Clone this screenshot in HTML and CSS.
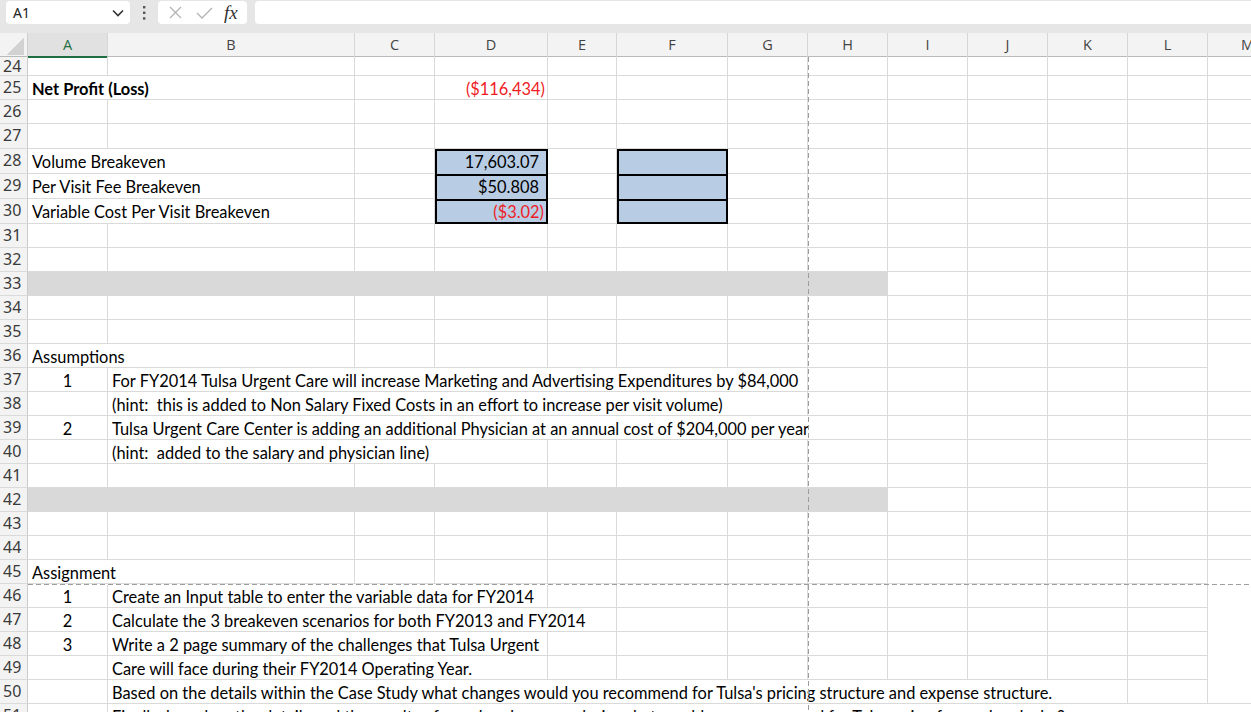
FILE: index.html
```html
<!DOCTYPE html>
<html lang="en">
<head>
    <meta charset="UTF-8">
    <title>Tulsa Urgent Care - Breakeven</title>
    <link rel="stylesheet" href="styles.css">
</head>
<body>
<div class="topbar">
    <div class="namebox">
        <span>A1</span>
        <svg width="12" height="8" viewBox="0 0 12 8"><path d="M1 1.5 L6 6.5 L11 1.5" fill="none" stroke="#333" stroke-width="1.6"/></svg>
    </div>
    <div class="dots">
        <svg width="4" height="14" viewBox="0 0 4 14"><rect x="1" y="0" width="2.4" height="2.4" fill="#555"/><rect x="1" y="5.6" width="2.4" height="2.4" fill="#555"/><rect x="1" y="11.2" width="2.4" height="2.4" fill="#555"/></svg>
    </div>
    <div class="fxbox">
        <svg class="cancel" width="13" height="13" viewBox="0 0 13 13"><path d="M1 1 L12 12 M12 1 L1 12" stroke="#b3b3b3" stroke-width="1.3"/></svg>
        <svg class="enter" width="17" height="12" viewBox="0 0 17 12"><path d="M1 6 L6 11 L16 1" fill="none" stroke="#b3b3b3" stroke-width="1.3"/></svg>
        <span class="fx">fx</span>
    </div>
    <div class="formula"></div>
</div>

<div class="sheet">
    <div class="colhead">
        <div class="corner"><i></i></div>
        <div class="sel">A</div><div>B</div><div>C</div><div>D</div><div>E</div><div>F</div><div>G</div>
        <div>H</div><div>I</div><div>J</div><div>K</div><div>L</div><div>M</div>
    </div>

    <div class="row short"><div class="rh">24</div><div></div><div></div><div></div><div></div><div></div><div></div><div></div><div></div><div></div><div></div><div></div><div></div><div></div></div>
    <div class="row"><div class="rh">25</div><div class="t s2 bold">Net Profit (Loss)</div><div></div><div class="r red neg">($116,434)</div><div></div><div></div><div></div><div></div><div></div><div></div><div></div><div></div><div></div></div>
    <div class="row"><div class="rh">26</div><div></div><div></div><div></div><div></div><div></div><div></div><div></div><div></div><div></div><div></div><div></div><div></div><div></div></div>
    <div class="row tall"><div class="rh">27</div><div></div><div></div><div></div><div></div><div></div><div></div><div></div><div></div><div></div><div></div><div></div><div></div><div></div></div>
    <div class="row tall"><div class="rh">28</div><div class="t s2">Volume Breakeven</div><div></div><div class="r blue top">17,603.07</div><div></div><div class="blue top"></div><div></div><div></div><div></div><div></div><div></div><div></div><div></div></div>
    <div class="row tall"><div class="rh">29</div><div class="t s2">Per Visit Fee Breakeven</div><div></div><div class="r blue">$50.808</div><div></div><div class="blue"></div><div></div><div></div><div></div><div></div><div></div><div></div><div></div></div>
    <div class="row tall"><div class="rh">30</div><div class="t s2">Variable Cost Per Visit Breakeven</div><div></div><div class="r red neg blue bot">($3.02)</div><div></div><div class="blue bot"></div><div></div><div></div><div></div><div></div><div></div><div></div><div></div></div>
    <div class="row"><div class="rh">31</div><div></div><div></div><div></div><div></div><div></div><div></div><div></div><div></div><div></div><div></div><div></div><div></div><div></div></div>
    <div class="row"><div class="rh">32</div><div></div><div></div><div></div><div></div><div></div><div></div><div></div><div></div><div></div><div></div><div></div><div></div><div></div></div>
    <div class="row"><div class="rh">33</div><div class="grey s8"></div><div></div><div></div><div></div><div></div><div></div></div>
    <div class="row"><div class="rh">34</div><div></div><div></div><div></div><div></div><div></div><div></div><div></div><div></div><div></div><div></div><div></div><div></div><div></div></div>
    <div class="row"><div class="rh">35</div><div></div><div></div><div></div><div></div><div></div><div></div><div></div><div></div><div></div><div></div><div></div><div></div><div></div></div>
    <div class="row"><div class="rh">36</div><div class="t s2">Assumptions</div><div></div><div></div><div></div><div></div><div></div><div></div><div></div><div></div><div></div><div></div></div>
    <div class="row"><div class="rh">37</div><div class="num">1</div><div class="t s6">For FY2014 Tulsa Urgent Care will increase Marketing and Advertising Expenditures by $84,000</div><div></div><div></div><div></div><div></div><div></div><div></div></div>
    <div class="row"><div class="rh">38</div><div></div><div class="t s6">(hint:&nbsp; this is added to Non Salary Fixed Costs in an effort to increase per visit volume)</div><div></div><div></div><div></div><div></div><div></div><div></div></div>
    <div class="row"><div class="rh">39</div><div class="num">2</div><div class="t s7">Tulsa Urgent Care Center is adding an additional Physician at an annual cost of $204,000 per year</div><div></div><div></div><div></div><div></div><div></div></div>
    <div class="row"><div class="rh">40</div><div></div><div class="t s3">(hint:&nbsp; added to the salary and physician line)</div><div></div><div></div><div></div><div></div><div></div><div></div><div></div><div></div></div>
    <div class="row"><div class="rh">41</div><div></div><div></div><div></div><div></div><div></div><div></div><div></div><div></div><div></div><div></div><div></div><div></div><div></div></div>
    <div class="row"><div class="rh">42</div><div class="grey s8"></div><div></div><div></div><div></div><div></div><div></div></div>
    <div class="row"><div class="rh">43</div><div></div><div></div><div></div><div></div><div></div><div></div><div></div><div></div><div></div><div></div><div></div><div></div><div></div></div>
    <div class="row"><div class="rh">44</div><div></div><div></div><div></div><div></div><div></div><div></div><div></div><div></div><div></div><div></div><div></div><div></div><div></div></div>
    <div class="row"><div class="rh">45</div><div class="t s2">Assignment</div><div></div><div></div><div></div><div></div><div></div><div></div><div></div><div></div><div></div><div></div></div>
    <div class="row"><div class="rh">46</div><div class="num">1</div><div class="t s3">Create an Input table to enter the variable data for FY2014</div><div></div><div></div><div></div><div></div><div></div><div></div><div></div><div></div></div>
    <div class="row"><div class="rh">47</div><div class="num">2</div><div class="t s4">Calculate the 3 breakeven scenarios for both FY2013 and FY2014</div><div></div><div></div><div></div><div></div><div></div><div></div><div></div></div>
    <div class="row"><div class="rh">48</div><div class="num">3</div><div class="t s3">Write a 2 page summary of the challenges that Tulsa Urgent</div><div></div><div></div><div></div><div></div><div></div><div></div><div></div><div></div></div>
    <div class="row"><div class="rh">49</div><div></div><div class="t s3">Care will face during their FY2014 Operating Year.</div><div></div><div></div><div></div><div></div><div></div><div></div><div></div><div></div></div>
    <div class="row"><div class="rh">50</div><div></div><div class="t s10">Based on the details within the Case Study what changes would you recommend for Tulsa's pricing structure and expense structure.</div><div></div><div></div></div>
    <div class="row"><div class="rh">51</div><div></div><div class="t s12">Finally, based on the details and the results of your breakeven analysis, what would you recommend for Tulsa going forward and why?</div></div>

    <!-- page break lines -->
    <div class="pb-v"></div>
    <div class="pb-h"></div>
</div>
</body>
</html>
```

FILE: styles.css
```css
*{
    margin: 0;
    padding: 0;
    box-sizing: border-box;
}
body{
    width: 1251px;
    height: 712px;
    overflow: hidden;
    background: #fff;
    font-family: "Lato", "Liberation Sans", sans-serif;
    color: #000;
}

/* formula bar */
.topbar{
    height: 33px;
    background: #e6e6e6;
    display: flex;
    align-items: flex-start;
    padding: 1px 0 0 6px;
    font-family: "Noto Sans", sans-serif;
}
.namebox{
    width: 124px;
    height: 23px;
    background: #fff;
    border-radius: 4px;
    display: flex;
    align-items: center;
    justify-content: space-between;
    padding: 0 6px 0 7px;
    font-size: 14px;
    color: #222;
}
.dots{
    width: 28px;
    height: 23px;
    display: flex;
    align-items: center;
    justify-content: center;
}
.fxbox{
    width: 89px;
    height: 23px;
    background: #fff;
    border-radius: 4px;
    display: flex;
    align-items: center;
    padding-left: 11px;
}
.fxbox .enter{
    margin-left: 14px;
}
.fx{
    margin-left: 11px;
    font-family: "Liberation Serif", serif;
    font-style: italic;
    font-size: 19px;
    color: #333;
    line-height: 1;
}
.formula{
    flex: 1;
    height: 23px;
    margin-left: 8px;
    background: #fff;
    border-radius: 4px 0 0 4px;
}

/* grid */
.sheet{
    position: relative;
    --cols: 28px 80px 247px 80px 113px 69px 111px 80px 80px 80px 80px 80px 80px 80px;
}
.colhead{
    display: grid;
    grid-template-columns: var(--cols);
    height: 24px;
    background: #f3f3f3;
    border-bottom: 1px solid #b9b9b9;
    font-family: "Open Sans", sans-serif;
    font-size: 14.5px;
    color: #444;
}
.colhead div{
    border-right: 1px solid #d6d6d6;
    text-align: center;
    line-height: 23px;
}
.colhead .corner{
    position: relative;
    border-right-color: #cfcfcf;
}
.corner i{
    position: absolute;
    right: 3px;
    bottom: 3px;
    width: 17px;
    height: 17px;
    background: linear-gradient(to bottom right, transparent 50%, #d2d2d2 50%);
}
.colhead .sel{
    background: #e1e1e1;
    color: #1e6e42;
    border-bottom: 2px solid #1e6e42;
}

.row{
    display: grid;
    grid-template-columns: var(--cols);
    height: 24px;
    font-size: 16.4px;
}
.row.short{
    height: 19px;
}
.row.tall{
    height: 25px;
}
.row > div{
    border-right: 1px solid #dadada;
    border-bottom: 1px solid #dadada;
    white-space: nowrap;
    overflow: hidden;
    line-height: 23px;
    padding-top: 1px;
}
.row .rh{
    background: #f3f3f3;
    border-right-color: #cbcbcb;
    font-family: "Noto Sans", sans-serif;
    font-size: 16px;
    color: #3a3a3a;
    padding-left: 3px;
    padding-top: 0;
    overflow: visible;
}
.row.short .rh{
    line-height: 18px;
}

.t{ padding-left: 4px; }
.num{ text-align: center; }
.r{ text-align: right; padding-right: 7px; }
.r.neg{ padding-right: 2px; }
.bold{ font-weight: bold; }
.red{ color: #ee1c25; }

.s2{ grid-column: span 2; }
.s3{ grid-column: span 3; }
.s4{ grid-column: span 4; }
.s6{ grid-column: span 6; }
.s7{ grid-column: span 7; }
.s8{ grid-column: span 8; }
.s10{ grid-column: span 10; }
.s12{ grid-column: span 12; }

.row .blue{
    background: #b8cce4;
    border: 2px solid #000;
    border-bottom: none;
    line-height: 22px;
    padding-top: 0;
}
.row .blue.bot{
    border-bottom: 2px solid #000;
}
.row .grey{
    background: #d9d9d9;
    border-right-color: #d9d9d9;
}

/* page break dashes */
.pb-v{
    position: absolute;
    left: 808px;
    top: 24px;
    bottom: 0;
    width: 1px;
    background: repeating-linear-gradient(to bottom, #9d9d9d 0 5px, transparent 5px 8px);
}
.pb-h{
    position: absolute;
    left: 28px;
    right: 0;
    top: 551px;
    height: 1px;
    background: repeating-linear-gradient(to right, #9d9d9d 0 5px, #fff 5px 8px);
}
```
